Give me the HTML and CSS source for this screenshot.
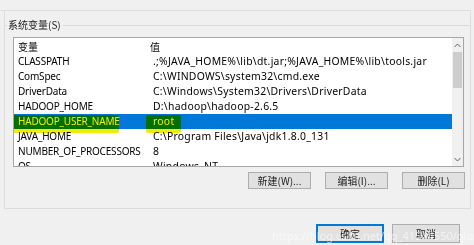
FILE: index.html
```html
<!DOCTYPE html>
<html>
<head>
<meta charset="utf-8">
<link rel="stylesheet" href="styles.css">
</head>
<body>
<div class="dialog">
  <div class="topband"></div>
  <div class="group">
    <div class="group-head"><span class="lead"></span><span class="label">系统变量(S)</span><span class="line"></span></div>
    <div class="list">
      <div class="rows">
        <div class="row head"><span class="c1 cjk">变量</span><span class="c2 cjk hv">值</span></div>
        <div class="row"><span class="c1">CLASSPATH</span><span class="c2">.;%JAVA_HOME%\lib\dt.jar;%JAVA_HOME%\lib\tools.jar</span></div>
        <div class="row"><span class="c1">ComSpec</span><span class="c2">C:\WINDOWS\system32\cmd.exe</span></div>
        <div class="row"><span class="c1">DriverData</span><span class="c2">C:\Windows\System32\Drivers\DriverData</span></div>
        <div class="row"><span class="c1">HADOOP_HOME</span><span class="c2">D:\hadoop\hadoop-2.6.5</span></div>
        <div class="row sel"><span class="c1">HADOOP_USER_NAME<i class="mark mark-name"></i></span><span class="c2">root<i class="mark mark-val"></i></span></div>
        <div class="row"><span class="c1">JAVA_HOME</span><span class="c2">C:\Program Files\Java\jdk1.8.0_131</span></div>
        <div class="row"><span class="c1">NUMBER_OF_PROCESSORS</span><span class="c2">8</span></div>
        <div class="row"><span class="c1">OS</span><span class="c2">Windows_NT</span></div>
      </div>
      <div class="scrollbar">
        <div class="arrow"><svg width="7" height="5" viewBox="0 0 7 5"><polyline points="0.5,4 3.5,1 6.5,4" fill="none" stroke="#606060" stroke-width="1"/></svg></div>
        <div class="thumb"></div>
        <div class="track"></div>
        <div class="arrow"><svg width="7" height="5" viewBox="0 0 7 5"><polyline points="0.5,1 3.5,4 6.5,1" fill="none" stroke="#606060" stroke-width="1"/></svg></div>
      </div>
    </div>
    <div class="btnrow">
      <button class="btn w63">新建(W)...</button>
      <button class="btn w63">编辑(I)...</button>
      <button class="btn w63">删除(L)</button>
    </div>
  </div>
  <div class="footer">
    <button class="btn big default">确定</button>
    <button class="btn big">取消</button>
  </div>
  <div class="watermark">https://blog.csdn.net/qq_41544550/qianmu</div>
</div>
</body>
</html>
```
FILE: styles.css
```css
html, body {
  margin: 0;
  padding: 0;
}
body {
  background: #f0f0f0;
  font-family: "Noto Sans", "Noto Sans CJK SC", sans-serif;
  font-size: 10px;
  color: #000;
}
.dialog {
  position: relative;
  width: 474px;
  height: 245px;
  overflow: hidden;
  background: #f0f0f0;
}
.topband {
  height: 10px;
  border-bottom: 1px solid #dedede;
  margin-right: 3px;
}
.group {
  margin: 0 3px 0 4px;
  border: 1px solid #dcdcdc;
  border-top: none;
  padding-bottom: 19px;
}
.group-head {
  display: flex;
  align-items: center;
  height: 12px;
  padding-top: 8px;
  margin: 0 -1px;
}
.lead {
  width: 3px;
  border-top: 1px solid #dcdcdc;
}
.label {
  font-family: "Noto Sans CJK SC", sans-serif;
  font-size: 10px;
  line-height: 12px;
  color: #222;
  padding: 0 2px 0 1px;
}
.line {
  flex: 1;
  border-top: 1px solid #dcdcdc;
}
.list {
  box-sizing: border-box;
  height: 130px;
  margin: 6px 6px 0 8px;
  border: 1px solid #a6a6a6;
  background: #fff;
  display: flex;
}
.rows {
  flex: 1;
  padding-top: 1px;
  overflow: hidden;
}
.row {
  position: relative;
  display: grid;
  grid-template-columns: 135px 1fr;
  height: 15px;
  line-height: 15px;
  white-space: nowrap;
}
.c1, .c2 {
  position: relative;
  padding-left: 4px;
}
.c1 {
  letter-spacing: -0.2px;
}
.c2 {
  font-size: 10.4px;
  letter-spacing: 0.25px;
}
.cjk {
  font-family: "Noto Sans CJK SC", sans-serif;
  font-size: 10px;
  letter-spacing: 0;
}
.hv {
  padding-left: 1px;
}
.sel {
  background: #0078d7;
  color: #fff;
}
.mark {
  position: absolute;
  top: 1px;
  height: 18px;
  background: #eeee00;
  mix-blend-mode: multiply;
  border-radius: 2px;
}
.mark-name {
  left: -2px;
  width: 107px;
}
.mark-val {
  left: -3px;
  width: 35px;
}
.scrollbar {
  width: 11px;
  background: #f0f0f0;
  display: flex;
  flex-direction: column;
}
.arrow {
  height: 14px;
  display: flex;
  align-items: center;
  justify-content: center;
}
.thumb {
  height: 36px;
  margin: 0 1px;
  background: #cdcdcd;
}
.track {
  flex: 1;
}
.btnrow {
  display: flex;
  justify-content: flex-end;
  gap: 14px;
  margin: 5px 5px 0 0;
}
.btn {
  box-sizing: border-box;
  height: 17px;
  padding: 0;
  border: 1px solid #adadad;
  background: #e1e1e1;
  font-family: "Noto Sans CJK SC", sans-serif;
  font-size: 10px;
  color: #222;
  line-height: 15px;
}
.w63 {
  width: 63px;
}
.footer {
  display: flex;
  justify-content: flex-end;
  gap: 8px;
  margin-top: 15px;
  padding-right: 14px;
}
.big {
  width: 68px;
  height: 19px;
}
.default {
  border: 1px solid #0078d7;
  box-shadow: inset 0 0 0 1px #0078d7;
}
.watermark {
  position: absolute;
  left: 272px;
  top: 228px;
  font-family: "Noto Sans", sans-serif;
  font-size: 11px;
  color: rgba(255, 255, 255, 0.6);
  white-space: nowrap;
}
```
